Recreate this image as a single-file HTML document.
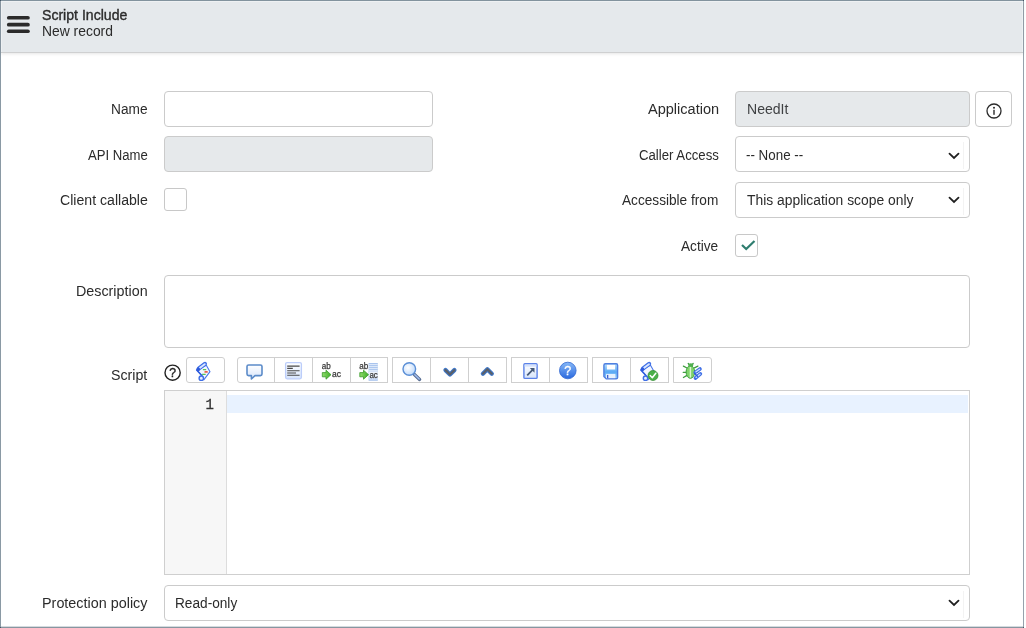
<!DOCTYPE html>
<html lang="en">
<head>
<meta charset="utf-8">
<title>Script Include | New record</title>
<style>
html,body{margin:0;padding:0;background:#fff;}
body{width:1026px;height:628px;overflow:hidden;position:relative;font-family:"Liberation Sans",sans-serif;font-size:14px;color:#2b2b2b;}
.frame{position:absolute;left:0;top:0;width:1022px;height:626px;border:1px solid #8a99a4;border-top-color:#8596a1;border-right-color:#96a2ac;border-bottom-color:#8796a0;background:#fff;box-shadow:inset 0 -1px 0 rgba(135,150,160,0.35);}
.cp{position:absolute;width:1px;height:1px;background:#435566;}
.abs{position:absolute;}
.hdr{position:absolute;left:1px;top:1px;width:1022px;height:51px;background:#e5e9ec;border-bottom:1px solid #cfd0d1;box-shadow:0 1px 3px rgba(0,0,0,0.10);}
.hdr .hl{position:absolute;left:0;top:0;right:0;bottom:0;border-left:1px solid #eef1f3;border-top:1px solid #eef1f3;border-right:1px solid #eef1f3;}
.txt{position:absolute;white-space:nowrap;line-height:16px;height:16px;}
.lbl{transform-origin:0 50%;}
.val{transform-origin:0 50%;}
.inp{position:absolute;box-sizing:border-box;border:1px solid #cbcbcb;border-radius:4px;background:#fff;}
.ro{background:#e6e9eb;border-color:#cbcbcb;}
.chk{position:absolute;box-sizing:border-box;border:1px solid #c8c8c8;border-radius:3px;background:#fff;}
.tb{position:absolute;top:357px;height:26px;box-sizing:border-box;border:1px solid #cfcfcf;background:#fff;}
</style>
</head>
<body>
<div id="page" style="position:absolute;left:0;top:0;width:1026px;height:628px;will-change:transform;">
<div class="frame"></div>
<div class="hdr"><div class="hl"></div></div>
<div class="cp" style="left:0;top:0"></div><div class="cp" style="left:1023px;top:0"></div><div class="cp" style="left:0;top:627px"></div><div class="cp" style="left:1023px;top:627px"></div>
<svg class="abs" style="left:4px;top:12px" width="30" height="26" viewBox="4 12 30 26"><rect x="6.9" y="15.9" width="22.9" height="3.7" rx="1.85" fill="#2b2b2b"/><rect x="6.9" y="22.8" width="22.9" height="3.7" rx="1.85" fill="#2b2b2b"/><rect x="6.9" y="29.4" width="22.9" height="3.7" rx="1.85" fill="#2b2b2b"/></svg>
<div class="txt val" id="t1" style="transform:scaleX(1.0056);left:42.30px;top:6.95px;-webkit-text-stroke:0.35px #2b2b2b;">Script Include</div>
<div class="txt val" id="t2" style="transform:scaleX(0.9913);left:42.46px;top:22.85px;">New record</div>

<!-- left column -->
<div class="txt lbl" id="l1" style="transform:scaleX(0.9770);left:111.42px;top:101.05px;">Name</div>
<div class="inp" style="left:164px;top:91px;width:269px;height:36px;"></div>
<div class="txt lbl" id="l2" style="transform:scaleX(0.9381);left:88.02px;top:146.95px;">API Name</div>
<div class="inp ro" style="left:164px;top:136px;width:269px;height:36px;"></div>
<div class="txt lbl" id="l3" style="transform:scaleX(1.0077);left:59.75px;top:192.45px;">Client callable</div>
<div class="chk" style="left:164px;top:188px;width:23px;height:23px;"></div>

<!-- right column -->
<div class="txt lbl" id="r1" style="transform:scaleX(1.0384);left:647.82px;top:101.05px;">Application</div>
<div class="inp ro" style="left:735px;top:91px;width:235px;height:36px;"></div>
<div class="txt val" id="v1" style="transform:scaleX(1.0036);left:747.30px;color:#3f4143;top:101.05px;">NeedIt</div>
<div class="inp" style="left:975px;top:91px;width:37px;height:36px;"></div>
<svg class="abs" style="left:985px;top:101.5px" width="18" height="18" viewBox="0 0 18 18"><circle cx="9" cy="9" r="7" fill="none" stroke="#2b2b2b" stroke-width="1.3"/><circle cx="9" cy="5.7" r="1" fill="#2b2b2b"/><rect x="8.3" y="7.8" width="1.4" height="5" fill="#2b2b2b"/></svg>

<div class="txt lbl" id="r2" style="transform:scaleX(0.9413);left:638.51px;top:146.95px;">Caller Access</div>
<div class="inp" style="left:735px;top:136px;width:235px;height:36px;"></div>
<div class="txt val" id="v2" style="transform:scaleX(0.9550);left:745.76px;top:146.95px;">-- None --</div>
<svg class="abs" style="left:947px;top:150px" width="14" height="12" viewBox="0 0 14 12"><path d="M2.5 3.6 L7 7.9 L11.5 3.6" fill="none" stroke="#1f1f1f" stroke-width="1.8" stroke-linecap="round" stroke-linejoin="miter"/></svg>

<div class="txt lbl" id="r3" style="transform:scaleX(0.9742);left:622.46px;top:192.45px;">Accessible from</div>
<div class="inp" style="left:735px;top:182px;width:235px;height:36px;"></div>
<div class="txt val" id="v3" style="transform:scaleX(0.9900);left:746.71px;top:192.45px;">This application scope only</div>
<svg class="abs" style="left:947px;top:194px" width="14" height="12" viewBox="0 0 14 12"><path d="M2.5 3.6 L7 7.9 L11.5 3.6" fill="none" stroke="#1f1f1f" stroke-width="1.8" stroke-linecap="round" stroke-linejoin="miter"/></svg>

<div class="txt lbl" id="r4" style="transform:scaleX(0.9742);left:680.86px;top:237.85px;">Active</div>
<div class="chk" style="left:735px;top:234px;width:23px;height:23px;"></div>
<svg class="abs" style="left:739px;top:238px" width="18" height="14" viewBox="0 0 18 14"><path d="M3 7 L7.2 11 L15.5 3" fill="none" stroke="#2f7d6f" stroke-width="2.2" stroke-linecap="butt" stroke-linejoin="miter"/></svg>

<div class="abs" style="left:963px;top:142px;width:1px;height:27px;background:#f3f3f3;"></div>
<div class="abs" style="left:963px;top:188px;width:1px;height:27px;background:#f3f3f3;"></div>
<!-- description -->
<div class="txt lbl" id="l4" style="transform:scaleX(1.0223);left:76.38px;top:283.45px;">Description</div>
<div class="inp" style="left:164px;top:275px;width:806px;height:73px;"></div>

<!-- script -->
<div class="txt lbl" id="l5" style="transform:scaleX(1.0143);left:110.74px;top:366.85px;">Script</div>

<!-- help icon -->
<svg class="abs" style="left:162px;top:362px" width="22" height="22" viewBox="162 362 22 22">
  <circle cx="172.6" cy="372.7" r="7.6" fill="#fff" stroke="#222" stroke-width="1.4"/>
  <text x="172.6" y="377" text-anchor="middle" font-family="Liberation Sans, sans-serif" font-size="12.2" fill="#222" stroke="#222" stroke-width="0.35">?</text>
</svg>

<!-- toolbar buttons -->
<div class="tb" style="left:186px;width:39px;border-radius:3px;"></div>
<div class="tb" style="left:237px;width:38px;border-radius:3px 0 0 3px;"></div>
<div class="tb" style="left:274px;width:39px;"></div>
<div class="tb" style="left:312px;width:39px;"></div>
<div class="tb" style="left:350px;width:38px;"></div>
<div class="tb" style="left:392px;width:39px;"></div>
<div class="tb" style="left:430px;width:39px;"></div>
<div class="tb" style="left:468px;width:39px;"></div>
<div class="tb" style="left:511px;width:39px;"></div>
<div class="tb" style="left:549px;width:39px;"></div>
<div class="tb" style="left:592px;width:39px;"></div>
<div class="tb" style="left:630px;width:39px;"></div>
<div class="tb" style="left:673px;width:39px;border-radius:0 3px 3px 0;"></div>

<!-- toolbar icons (page coordinates) -->
<svg class="abs" style="left:186px;top:357px" width="526" height="26" viewBox="186 357 526 26">
  <defs>
    <linearGradient id="gb" x1="0" y1="0" x2="0" y2="1"><stop offset="0" stop-color="#ffffff"/><stop offset="1" stop-color="#d6e4fb"/></linearGradient>
    <radialGradient id="gm" cx="0.4" cy="0.4" r="0.7"><stop offset="0" stop-color="#ffffff"/><stop offset="1" stop-color="#b9d6fb"/></radialGradient>
    <linearGradient id="gh" x1="0" y1="0" x2="0" y2="1"><stop offset="0" stop-color="#86b8f8"/><stop offset="1" stop-color="#2a69de"/></linearGradient>
    <linearGradient id="gs" x1="0" y1="0" x2="0" y2="1"><stop offset="0" stop-color="#b9defb"/><stop offset="0.55" stop-color="#58a9f5"/><stop offset="1" stop-color="#9ccffa"/></linearGradient>
    <linearGradient id="gg" x1="0" y1="0" x2="1" y2="0"><stop offset="0" stop-color="#8fdc6a"/><stop offset="1" stop-color="#3fae2a"/></linearGradient>
  </defs>
  <!-- 1 script -->
  <g>
    <path d="M197 370 L206.3 365.2 L210 371.7 L203.8 379.8 L200 377.6 L201.9 375.6 Z" fill="#f3f7ff" stroke="#4a78e8" stroke-width="1.1" stroke-linejoin="round"/>
    <path d="M198.7 368.7 L204.9 363.9" stroke="#3f6fe6" stroke-width="4.2" stroke-linecap="round" fill="none"/>
    <path d="M200 367.8 L204.7 364.2" stroke="#d9e6ff" stroke-width="2" stroke-linecap="round" fill="none"/>
    <circle cx="198.3" cy="369.3" r="1.7" fill="#2f5bdc"/>
    <path d="M196.6 370 L201.9 375.8" stroke="#2f5bdc" stroke-width="1.4" stroke-linecap="round" fill="none"/>
    <circle cx="201.3" cy="378.2" r="2.2" fill="#e6eeff" stroke="#3f6fe6" stroke-width="1.4"/>
    <path d="M202.9 369.6 H206.2 M202.1 374.4 H205.7" stroke="#58c458" stroke-width="1.3" fill="none"/>
    <rect x="204.4" y="371.1" width="3.4" height="1.7" rx="0.6" fill="#e8604c"/>
  </g>
  <!-- 2 comment -->
  <g>
    <path d="M248.6 365 H260.4 Q262 365 262 366.6 V374 Q262 375.6 260.4 375.6 H255 L251.4 379 V375.6 H248.6 Q247 375.6 247 374 V366.6 Q247 365 248.6 365 Z" fill="url(#gb)" stroke="#5b8bc9" stroke-width="1.6" stroke-linejoin="round"/>
  </g>
  <!-- 3 format -->
  <g>
    <rect x="285.6" y="362.6" width="15.8" height="16.2" rx="1.5" fill="url(#gb)" stroke="#bccdfa" stroke-width="1.3"/>
    <path d="M287.2 366.1 H299.6 M287.2 368.4 H292.8 M287.2 370.7 H299.6 M287.2 373 H296 M287.2 375.3 H299.6" stroke="#4a4a4a" stroke-width="1.1" fill="none"/>
  </g>
  <!-- 4 replace -->
  <g font-family="Liberation Sans, sans-serif" font-size="8.2" fill="#3a3a3a">
    <text x="321.8" y="368.8" textLength="9" lengthAdjust="spacingAndGlyphs" stroke="#3a3a3a" stroke-width="0.25">ab</text>
    <text x="332" y="377.2" textLength="9" lengthAdjust="spacingAndGlyphs" stroke="#3a3a3a" stroke-width="0.25">ac</text>
    <path d="M322.3 372.6 H326 V370.2 L331 374.7 L326 379.2 V376.8 H322.3 Z" fill="url(#gg)" stroke="#3a9a2a" stroke-width="0.8" stroke-linejoin="round"/>
  </g>
  <!-- 5 replace all -->
  <g font-family="Liberation Sans, sans-serif" font-size="8.2" fill="#3a3a3a">
    <rect x="368.6" y="363" width="9.2" height="17.8" fill="#a9c4ee"/>
    <path d="M368.6 364.6 H377.8 M368.6 366.6 H377.8 M368.6 368.6 H377.8 M368.6 370.6 H377.8 M368.6 379 H377.8" stroke="#e8f0fc" stroke-width="0.9" fill="none"/>
    <rect x="369" y="371.4" width="8.8" height="6.8" fill="#eef3fb"/>
    <text x="359.3" y="368.8" textLength="9" lengthAdjust="spacingAndGlyphs" stroke="#3a3a3a" stroke-width="0.25">ab</text>
    <text x="369.4" y="377.8" textLength="8.4" lengthAdjust="spacingAndGlyphs" stroke="#3a3a3a" stroke-width="0.25">ac</text>
    <path d="M359.8 372.6 H363.5 V370.2 L368.5 374.7 L363.5 379.2 V376.8 H359.8 Z" fill="url(#gg)" stroke="#3a9a2a" stroke-width="0.8" stroke-linejoin="round"/>
  </g>
  <!-- 6 search -->
  <g>
    <path d="M414.4 374.4 L419.6 379.4" stroke="#5a6f94" stroke-width="3.4" stroke-linecap="round" fill="none"/>
    <path d="M414.8 374.8 L419.2 379" stroke="#9fbdf0" stroke-width="1.5" stroke-linecap="round" fill="none"/>
    <circle cx="409.3" cy="369" r="6.3" fill="url(#gm)" stroke="#5b8fd6" stroke-width="1.4"/>
  </g>
  <!-- 7 down -->
  <path d="M445.5 370.1 L449.95 374.5 L454.4 370.1" fill="none" stroke="#3f78c9" stroke-width="4.3" stroke-linecap="round" stroke-linejoin="round"/>
  <path d="M445.5 370.1 L449.95 374.5 L454.4 370.1" fill="none" stroke="#5a5f68" stroke-width="2.2" stroke-linecap="round" stroke-linejoin="round"/>
  <!-- 8 up -->
  <path d="M482.9 373.7 L487.35 369.2 L491.8 373.7" fill="none" stroke="#3f78c9" stroke-width="4.3" stroke-linecap="round" stroke-linejoin="round"/>
  <path d="M482.9 373.7 L487.35 369.2 L491.8 373.7" fill="none" stroke="#5a5f68" stroke-width="2.2" stroke-linecap="round" stroke-linejoin="round"/>
  <!-- 9 fullscreen -->
  <g>
    <rect x="523.9" y="363.8" width="13.2" height="14.6" rx="1" fill="url(#gb)" stroke="#5b82e8" stroke-width="1.4"/>
    <rect x="524.6" y="364.5" width="11.8" height="2.2" fill="#d5e2fc"/>
    <path d="M527.2 375.3 L532.8 369.7" stroke="#465a78" stroke-width="1.8" fill="none"/>
    <path d="M529.8 368 H534.5 V372.7 Z" fill="#465a78"/>
  </g>
  <!-- 10 help -->
  <g>
    <circle cx="567.8" cy="370.5" r="8.3" fill="url(#gh)" stroke="#2f66d0" stroke-width="0.8"/>
    <text x="567.8" y="375.2" text-anchor="middle" font-family="Liberation Sans, sans-serif" font-size="12.5" fill="#ffffff" stroke="#ffffff" stroke-width="0.3">?</text>
  </g>
  <!-- 11 save -->
  <g>
    <path d="M605.4 363.8 H616.2 Q617.6 363.8 617.6 365.2 V377.4 Q617.6 378.8 616.2 378.8 H606.2 L603.9 376.6 V365.2 Q603.9 363.8 605.4 363.8 Z" fill="url(#gs)" stroke="#4f7fe0" stroke-width="1.4" stroke-linejoin="round"/>
    <rect x="606.9" y="364.9" width="8.2" height="4.6" fill="#ffffff"/>
    <rect x="606.1" y="373.9" width="9.3" height="4.3" fill="#e6f1fd"/>
    <rect x="607" y="374.9" width="1.3" height="3.4" fill="#3f5fd0"/>
  </g>
  <!-- 12 script check -->
  <g>
    <g transform="translate(444.2 0)">
    <path d="M197 370 L206.3 365.2 L210 371.7 L203.8 379.8 L200 377.6 L201.9 375.6 Z" fill="#f3f7ff" stroke="#4a78e8" stroke-width="1.1" stroke-linejoin="round"/>
    <path d="M198.7 368.7 L204.9 363.9" stroke="#3f6fe6" stroke-width="4.2" stroke-linecap="round" fill="none"/>
    <path d="M200 367.8 L204.7 364.2" stroke="#d9e6ff" stroke-width="2" stroke-linecap="round" fill="none"/>
    <circle cx="198.3" cy="369.3" r="1.7" fill="#2f5bdc"/>
    <path d="M196.6 370 L201.9 375.8" stroke="#2f5bdc" stroke-width="1.4" stroke-linecap="round" fill="none"/>
    <circle cx="201.3" cy="378.2" r="2.2" fill="#e6eeff" stroke="#3f6fe6" stroke-width="1.4"/>
    </g>
    <circle cx="653" cy="375.5" r="5" fill="#4ab04a" stroke="#2f8a2f" stroke-width="0.7"/>
    <path d="M650.2 375.6 L652.3 377.8 L655.8 373.2" fill="none" stroke="#ffffff" stroke-width="1.5" stroke-linecap="round" stroke-linejoin="round"/>
  </g>
  <!-- 13 bug -->
  <g>
    <path d="M683.4 366.1 L686.6 367.8 M683.2 372.3 H686.4 M683.4 377.5 L686.6 375.6 M697.9 366.1 L694.4 367.8 M697.6 372.3 H694 M688.2 363.4 L689.4 365 M693.2 363.4 L692 365" stroke="#3f9e3f" stroke-width="1.3" stroke-linecap="round" fill="none"/>
    <ellipse cx="690.4" cy="372" rx="4.3" ry="6.3" fill="#7fd46a" stroke="#3f9e3f" stroke-width="1"/>
    <ellipse cx="690.8" cy="365" rx="2.6" ry="1.7" fill="#4fb04f"/>
    <path d="M690.4 367 V377.6" stroke="#d9f3cf" stroke-width="1.4"/>
    <path d="M695.2 372.4 L700 369" stroke="#3f6fe6" stroke-width="3.6" stroke-linecap="round" fill="none"/>
    <path d="M696 371.8 L699.6 369.3" stroke="#cfdfff" stroke-width="1.4" stroke-linecap="round" fill="none"/>
    <path d="M695.4 378 L700.4 373.8" stroke="#3f6fe6" stroke-width="3.6" stroke-linecap="round" fill="none"/>
    <path d="M696.2 377.3 L700 374.2" stroke="#cfdfff" stroke-width="1.4" stroke-linecap="round" fill="none"/>
    <path d="M694.6 373.4 L697.4 376.2" stroke="#2f5bdc" stroke-width="1.4" stroke-linecap="round" fill="none"/>
  </g>
</svg>

<div class="abs" id="editor" style="left:164px;top:390px;width:806px;height:185px;box-sizing:border-box;border:1px solid #cfcfcf;background:#fff;">
  <div class="abs" style="left:0;top:0;width:61px;height:183px;background:#f7f7f7;border-right:1px solid #dddddd;"></div>
  <div class="abs" style="left:62px;top:4px;width:741px;height:18px;background:#e8f2ff;"></div>
  <div class="txt" id="ln" style="left:40.4px;top:6px;font-family:'Liberation Mono',monospace;font-size:14px;color:#333;-webkit-text-stroke:0.3px #333;">1</div>
</div>

<!-- protection policy -->
<div class="txt lbl" id="l6" style="transform:scaleX(1.0268);left:41.85px;top:594.85px;">Protection policy</div>
<div class="inp" style="left:164px;top:585px;width:806px;height:36px;"></div>
<div class="abs" style="left:963px;top:591px;width:1px;height:27px;background:#f3f3f3;"></div>
<div class="txt val" id="v4" style="transform:scaleX(0.9751);left:175.32px;top:594.75px;">Read-only</div>
<svg class="abs" style="left:947px;top:597px" width="14" height="12" viewBox="0 0 14 12"><path d="M2.5 3.6 L7 7.9 L11.5 3.6" fill="none" stroke="#1f1f1f" stroke-width="1.8" stroke-linecap="round" stroke-linejoin="miter"/></svg>
</div>
</body>
</html>
